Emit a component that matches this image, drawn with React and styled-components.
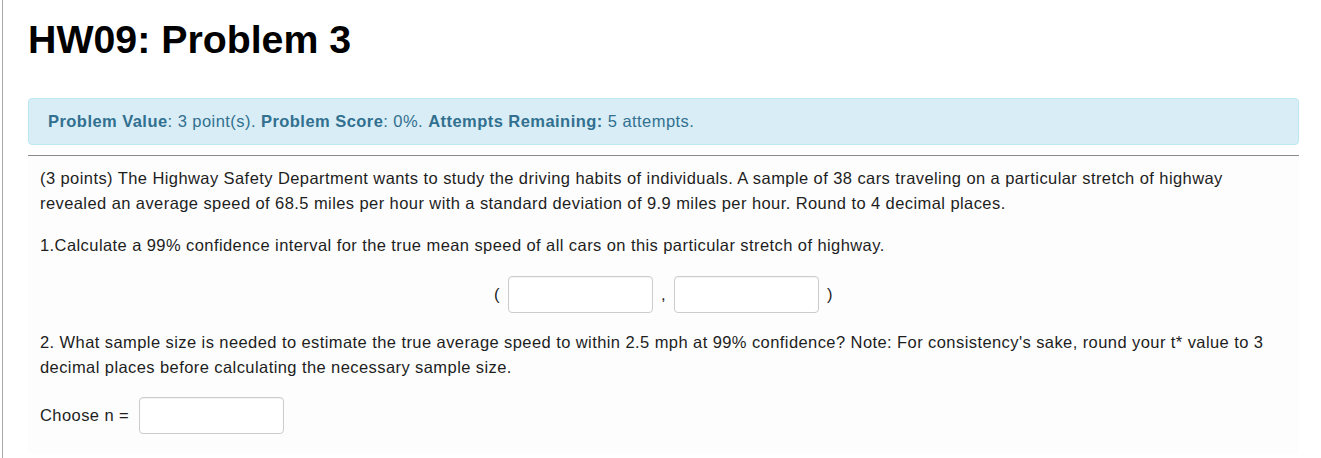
import React from "react";
import styled, { createGlobalStyle } from "styled-components";

const GlobalStyle = createGlobalStyle`
  html, body {
    margin: 0;
    padding: 0;
    background: #fff;
  }
  body {
    font-family: "Liberation Sans", Arial, sans-serif;
    color: #222;
  }
`;

function App() {
  return (
    <>
      <GlobalStyle />
      <Page>
        <Title>HW09: Problem 3</Title>
        <Alert>
          <B>Problem Value</B>: 3 point(s). <B>Problem Score</B>: 0%.{" "}
          <B>Attempts Remaining:</B> 5 attempts.
        </Alert>
        <Rule />
        <Body>
          <P>
            (3 points) The Highway Safety Department wants to study the driving
            habits of individuals. A sample of 38 cars traveling on a particular
            stretch of highway revealed an average speed of 68.5 miles per hour
            with a standard deviation of 9.9 miles per hour. Round to 4 decimal
            places.
          </P>
          <P>
            1.Calculate a 99% confidence interval for the true mean speed of all
            cars on this particular stretch of highway.
          </P>
          <IntervalRow>
            <Mark>(</Mark>
            <Field type="text" />
            <Mark>,</Mark>
            <Field type="text" />
            <Mark>)</Mark>
          </IntervalRow>
          <P>
            2. What sample size is needed to estimate the true average speed to
            within 2.5 mph at 99% confidence? Note: For consistency's sake, round
            your t* value to 3 decimal places before calculating the necessary
            sample size.
          </P>
          <AnswerRow>
            <span>Choose n =</span>
            <Field type="text" />
          </AnswerRow>
        </Body>
      </Page>
    </>
  );
}

const Page = styled.div`
  margin-left: 2px;
  border-left: 1px solid #a8a8a8;
  padding: 0 22px 0 25px;
  min-height: 458px;
  box-sizing: border-box;
`;

const Title = styled.h1`
  margin: 0;
  padding-top: 18px;
  font-size: 39.3px;
  line-height: 43px;
  font-weight: bold;
  color: #000;
`;

const Alert = styled.div`
  margin-top: 37px;
  padding: 11px 19px;
  background: #d9edf7;
  border: 1px solid #bce8f1;
  border-radius: 4px;
  color: #31708f;
  font-size: 16.5px;
  letter-spacing: 0.45px;
  line-height: 23px;
`;

const B = styled.b`
  font-weight: bold;
`;

const Rule = styled.hr`
  margin: 10px 0 0;
  border: 0;
  border-top: 1px solid #8a8a8a;
  height: 0;
`;

const Body = styled.div`
  background: #fdfdfd;
  padding: 10px 12px 20px;
  font-size: 16.5px;
  letter-spacing: 0.42px;
  line-height: 25px;
  color: #1e1e1e;
`;

const P = styled.p`
  margin: 0 0 17px;
`;

const IntervalRow = styled.div`
  display: flex;
  justify-content: center;
  align-items: center;
  gap: 8px;
  margin: 18px 0 17px;
`;

const Mark = styled.span`
  font-size: 16.5px;
`;

const AnswerRow = styled.div`
  display: flex;
  align-items: center;
  gap: 10px;
  margin-top: 2px;
`;

const Field = styled.input`
  width: 145px;
  height: 37px;
  box-sizing: border-box;
  border: 1px solid #cccccc;
  border-radius: 4px;
  background: #fff;
  padding: 6px 10px;
  font-size: 16px;
  font-family: inherit;
  box-shadow: inset 0 1px 1px rgba(0, 0, 0, 0.05);
  outline: none;
`;

export default App;
